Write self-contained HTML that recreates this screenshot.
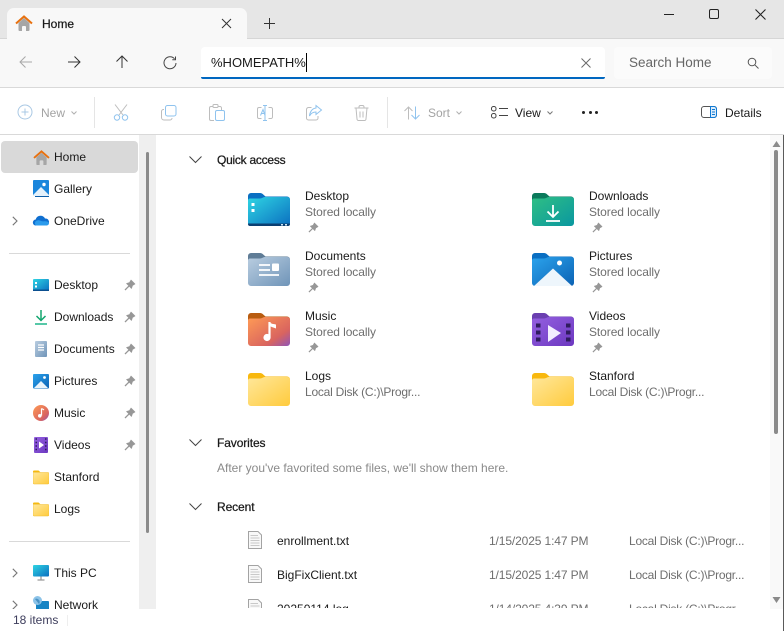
<!DOCTYPE html>
<html><head><meta charset="utf-8"><title>Home</title>
<style>
html,body{margin:0;padding:0;width:784px;height:631px;overflow:hidden;background:#fff}
body{position:relative;font:12px/16px "Liberation Sans",sans-serif;color:#1a1a1a}
.a{position:absolute}
.t{position:absolute;white-space:nowrap;line-height:16px;font-size:12px}
.g{color:#6e6e6e}
.l{letter-spacing:-.23px}
.s{letter-spacing:-.08px}
.m{letter-spacing:-.12px}
.d{color:#a3a3a3}
.b{-webkit-text-stroke:.25px #1a1a1a}
svg{position:absolute;overflow:visible}
</style></head><body>
<svg width="0" height="0" style="position:absolute">
<defs>
<linearGradient id="yf" x1="0" y1="0" x2="1" y2="1"><stop offset="0" stop-color="#ffe79a"/><stop offset="1" stop-color="#ffcb3d"/></linearGradient>
<linearGradient id="bf" x1="0" y1="0" x2="1" y2="1"><stop offset="0" stop-color="#2fd5e3"/><stop offset="1" stop-color="#0b6fc0"/></linearGradient>
<linearGradient id="gf" x1="0" y1="0" x2="1" y2="1"><stop offset="0" stop-color="#2fbf84"/><stop offset="1" stop-color="#0a97a0"/></linearGradient>
<linearGradient id="sf" x1="0" y1="0" x2="1" y2="1"><stop offset="0" stop-color="#b9cde0"/><stop offset="1" stop-color="#6f94b8"/></linearGradient>
<linearGradient id="pf" x1="0" y1="0" x2="1" y2="1"><stop offset="0" stop-color="#2ba3ec"/><stop offset="1" stop-color="#0c62b4"/></linearGradient>
<linearGradient id="of" x1="0" y1="0" x2="1" y2="1"><stop offset="0" stop-color="#ff9b55"/><stop offset=".7" stop-color="#d9645f"/><stop offset="1" stop-color="#8f55b8"/></linearGradient>
<linearGradient id="vf" x1="0" y1="0" x2="1" y2="1"><stop offset="0" stop-color="#9460e0"/><stop offset="1" stop-color="#6c38c0"/></linearGradient>
<symbol id="pin" viewBox="0 0 12 12"><path d="M7 1L11 5 8.500 6.500 7.500 9.500 2.500 4.500 5.500 3.500Z" fill="#979797" stroke="#979797" stroke-width=".6" stroke-linejoin="round"/><path d="M1 11L5 7" stroke="#979797" stroke-width="1.300"/></symbol>
<symbol id="sfold" viewBox="0 0 16 16"><path d="M0 2.500a1 1 0 0 1 1-1h4.500l2 1.800H0z" fill="#f5b90f"/><path d="M0 3.500h15a1 1 0 0 1 1 1V14a1 1 0 0 1-1 1H1a1 1 0 0 1-1-1z" fill="url(#yf)" stroke="#f0bd2e" stroke-width=".5"/></symbol>
<symbol id="doc" viewBox="0 0 14 18"><path d="M.5.500h9.500l3.500 3.500v13.500H.5z" fill="#f8f8f8" stroke="#a3a3a3"/><path d="M2.500 4.500h7.500M2.500 7h9M2.500 9.500h9M2.500 12h9M2.500 14.500h9" stroke="#c9c9c9"/></symbol>
<symbol id="fb" viewBox="0 0 42 33"><path d="M0 3a3 3 0 0 1 3-3h9c1.500 0 2.500.7 3.500 1.700L17.500 3.500H39a3 3 0 0 1 3 3V12H0z" fill="#0a6fc2"/><path d="M0 7.500c0-1 .8-2 2-2h10c2 0 3.500-1.500 4.500-1.500H39a3 3 0 0 1 3 2.500V30a3 3 0 0 1-3 3H3a3 3 0 0 1-3-3z" fill="url(#bf)"/></symbol>
<symbol id="fg" viewBox="0 0 42 33"><path d="M0 3a3 3 0 0 1 3-3h9c1.500 0 2.500.7 3.500 1.700L17.500 3.500H39a3 3 0 0 1 3 3V12H0z" fill="#0b7a5c"/><path d="M0 7.500c0-1 .8-2 2-2h10c2 0 3.500-1.500 4.500-1.500H39a3 3 0 0 1 3 2.500V30a3 3 0 0 1-3 3H3a3 3 0 0 1-3-3z" fill="url(#gf)"/></symbol>
<symbol id="fs" viewBox="0 0 42 33"><path d="M0 3a3 3 0 0 1 3-3h9c1.500 0 2.500.7 3.500 1.700L17.500 3.500H39a3 3 0 0 1 3 3V12H0z" fill="#5f7c96"/><path d="M0 7.500c0-1 .8-2 2-2h10c2 0 3.500-1.500 4.500-1.500H39a3 3 0 0 1 3 2.500V30a3 3 0 0 1-3 3H3a3 3 0 0 1-3-3z" fill="url(#sf)"/></symbol>
<symbol id="fp" viewBox="0 0 42 33"><path d="M0 3a3 3 0 0 1 3-3h9c1.500 0 2.500.7 3.500 1.700L17.500 3.500H39a3 3 0 0 1 3 3V12H0z" fill="#0a6fc2"/><path d="M0 7.500c0-1 .8-2 2-2h10c2 0 3.500-1.500 4.500-1.500H39a3 3 0 0 1 3 2.500V30a3 3 0 0 1-3 3H3a3 3 0 0 1-3-3z" fill="url(#pf)"/></symbol>
<symbol id="fo" viewBox="0 0 42 33"><path d="M0 3a3 3 0 0 1 3-3h9c1.500 0 2.500.7 3.500 1.700L17.500 3.500H39a3 3 0 0 1 3 3V12H0z" fill="#b85c10"/><path d="M0 7.500c0-1 .8-2 2-2h10c2 0 3.500-1.500 4.500-1.500H39a3 3 0 0 1 3 2.500V30a3 3 0 0 1-3 3H3a3 3 0 0 1-3-3z" fill="url(#of)"/></symbol>
<symbol id="fv" viewBox="0 0 42 33"><path d="M0 3a3 3 0 0 1 3-3h9c1.500 0 2.500.7 3.500 1.700L17.500 3.500H39a3 3 0 0 1 3 3V12H0z" fill="#6a3fb0"/><path d="M0 7.500c0-1 .8-2 2-2h10c2 0 3.500-1.500 4.500-1.500H39a3 3 0 0 1 3 2.500V30a3 3 0 0 1-3 3H3a3 3 0 0 1-3-3z" fill="url(#vf)"/></symbol>
<symbol id="fy" viewBox="0 0 42 33"><path d="M0 3a3 3 0 0 1 3-3h9c1.500 0 2.500.7 3.500 1.700L17.500 3.500H39a3 3 0 0 1 3 3V12H0z" fill="#f8b80e"/><path d="M0 7.500c0-1 .8-2 2-2h10c2 0 3.500-1.500 4.500-1.500H39a3 3 0 0 1 3 2.500V30a3 3 0 0 1-3 3H3a3 3 0 0 1-3-3z" fill="url(#yf)"/></symbol>
</defs>
</svg>

<!-- title bar -->
<div class="a" style="left:0;top:0;width:784px;height:39px;background:#e6e6e6"></div>
<div class="a" style="left:247px;top:38px;width:537px;height:1px;background:#d6d6d6"></div>
<div class="a" style="left:0;top:38px;width:7px;height:1px;background:#d6d6d6"></div>
<div class="a" style="left:7px;top:8px;width:240px;height:32px;background:#f8f8f8;border-radius:7px 7px 0 0"></div>
<svg style="left:15px;top:15px" width="18" height="17" viewBox="0 0 18 17"><path d="M3.500 8L9 3l5.500 5v7a1 1 0 0 1-1 1h-2.500v-4a1 1 0 0 0-1-1H8a1 1 0 0 0-1 1v4H4.500a1 1 0 0 1-1-1z" fill="#a6a6a6"/><path d="M1 8.500L9 1.500l8 7" fill="none" stroke="#e8710f" stroke-width="2"/></svg>
<div class="t b" style="left:42px;top:16px;font-size:12px">Home</div>
<svg style="left:221px;top:18px" width="11" height="11"><path d="M1 1l9 9M10 1l-9 9" stroke="#333" stroke-width="1"/></svg>
<svg style="left:264px;top:18px" width="11" height="11"><path d="M5.500 0v11M0 5.500h11" stroke="#333" stroke-width="1"/></svg>
<div class="a" style="left:664px;top:14px;width:10px;height:1px;background:#222"></div>
<div class="a" style="left:709px;top:9px;width:8px;height:8px;border:1.200px solid #222;border-radius:2px"></div>
<svg style="left:755px;top:9px" width="11" height="11"><path d="M.5.500l10 10M10.500.500l-10 10" stroke="#222" stroke-width="1.100"/></svg>

<!-- nav bar -->
<div class="a" style="left:0;top:39px;width:784px;height:48px;background:#f8f8f8"></div>
<div class="a" style="left:7px;top:38px;width:240px;height:2px;background:#f8f8f8"></div>
<div class="a" style="left:0;top:87px;width:784px;height:1px;background:#d9d9d9"></div>
<svg style="left:19px;top:55px" width="14" height="14"><path d="M13 7H1M6.500 1.500L1 7l5.500 5.500" fill="none" stroke="#a8a8a8"/></svg>
<svg style="left:67px;top:55px" width="14" height="14"><path d="M1 7h12M7.500 1.500L13 7l-5.500 5.500" fill="none" stroke="#333"/></svg>
<svg style="left:115px;top:55px" width="14" height="14"><path d="M7 13V1M1.500 6.500L7 1l5.500 5.500" fill="none" stroke="#333"/></svg>
<svg style="left:163px;top:56px" width="14" height="14"><path d="M11.500 2.800A6 6 0 1 0 13 7" fill="none" stroke="#444"/><path d="M12.500.500v3.200H9.300" fill="none" stroke="#444"/></svg>
<div class="a" style="left:201px;top:47px;width:404px;height:30px;background:#fff;border-radius:4px 4px 0 0"></div>
<div class="a" style="left:201px;top:77px;width:404px;height:2px;background:#0067c0;border-radius:0 0 3px 3px"></div>
<div class="t" style="left:211px;top:55px;font-size:13px;color:#1a1a1a">%HOMEPATH%</div>
<div class="a" style="left:306px;top:53px;width:1px;height:19px;background:#000"></div>
<svg style="left:581px;top:58px" width="10" height="10"><path d="M.5.500l9 9M9.500.500l-9 9" stroke="#6a6a6a"/></svg>
<div class="a" style="left:614px;top:47px;width:158px;height:32px;background:#fbfbfb;border-radius:4px"></div>
<div class="t" style="left:629px;top:55px;font-size:13.500px;color:#666">Search Home</div>
<svg style="left:747px;top:57px" width="12" height="12"><circle cx="5" cy="5" r="3.800" fill="none" stroke="#555"/><path d="M7.800 7.800L11.500 11.500" stroke="#555"/></svg>

<!-- toolbar -->
<svg style="left:17px;top:104px" width="16" height="16"><circle cx="8" cy="8" r="7" fill="none" stroke="#a9c8e4"/><path d="M8 4.500v7M4.500 8h7" stroke="#a9c8e4"/></svg>
<div class="t d" style="left:41px;top:105px">New</div>
<svg style="left:71px;top:111px" width="6" height="4"><path d="M.5.500L3 3 5.500.500" fill="none" stroke="#b0b0b0"/></svg>
<div class="a" style="left:94px;top:97px;width:1px;height:31px;background:#e5e5e5"></div>
<svg style="left:113px;top:104px" width="16" height="17"><path d="M2 .5l8 10.500M14 .5L6 11" fill="none" stroke="#bdbdbd"/><circle cx="4" cy="13.500" r="2.700" fill="none" stroke="#8fc3ee"/><circle cx="12" cy="13.500" r="2.700" fill="none" stroke="#8fc3ee"/></svg>
<svg style="left:161px;top:105px" width="16" height="16"><path d="M3 4.500H2.500a2 2 0 0 0-2 2v6a2.500 2.500 0 0 0 2.500 2.500h6a2 2 0 0 0 2-2" fill="none" stroke="#bdbdbd"/><rect x="4.500" y=".5" width="10.500" height="10.500" rx="2" fill="none" stroke="#8fc3ee"/></svg>
<svg style="left:209px;top:104px" width="16" height="17"><path d="M4 2.500H2a1.500 1.500 0 0 0-1.500 1.500v11A1.500 1.500 0 0 0 2 16.500h3M9 2.500h2a1.500 1.500 0 0 1 1.500 1.500v2" fill="none" stroke="#bdbdbd"/><rect x="4" y=".5" width="5" height="3" rx="1" fill="none" stroke="#bdbdbd"/><rect x="6.500" y="6.500" width="9" height="10" rx="1.500" fill="none" stroke="#8fc3ee"/></svg>
<svg style="left:257px;top:105px" width="16" height="16"><path d="M4.500 2.500H2A1.500 1.500 0 0 0 .5 4v8A1.500 1.500 0 0 0 2 13.500h2.500M11.500 2.500H14A1.500 1.500 0 0 1 15.500 4v8a1.500 1.500 0 0 1-1.500 1.500h-2.500" fill="none" stroke="#bdbdbd"/><path d="M8 .5v15M6 .5h4M6 15.500h4" stroke="#8fc3ee" fill="none"/><path d="M3.500 10.500L6 4.500l2 6M4.500 8.500h3" fill="none" stroke="#8fc3ee"/></svg>
<svg style="left:306px;top:105px" width="16" height="16"><path d="M5.500 2.500H2.500a2 2 0 0 0-2 2v8.500a2 2 0 0 0 2 2H10a2 2 0 0 0 2-2v-2" fill="none" stroke="#bdbdbd"/><path d="M10 .5l5.500 4.500L10 9.500V7C7 7 5 8 3.500 11c.3-4 2.500-7.500 6.500-8z" fill="none" stroke="#8fc3ee"/></svg>
<svg style="left:354px;top:105px" width="15" height="16"><path d="M.5 3h14M5 3V2a1.500 1.500 0 0 1 1.500-1.500h2A1.500 1.500 0 0 1 10 2v1M2 3l1 11a1.500 1.500 0 0 0 1.500 1.500h6A1.500 1.500 0 0 0 12 14l1-11M6 6.500v6M9 6.500v6" fill="none" stroke="#bdbdbd"/></svg>
<div class="a" style="left:387px;top:97px;width:1px;height:31px;background:#e5e5e5"></div>
<svg style="left:404px;top:106px" width="16" height="14"><path d="M4.500 13.500V1M.5 5L4.500 1l4 4" fill="none" stroke="#bdbdbd"/><path d="M11.500.5V13M7.500 9l4 4 4-4" fill="none" stroke="#8fc3ee"/></svg>
<div class="t d" style="left:428px;top:105px">Sort</div>
<svg style="left:456px;top:111px" width="6" height="4"><path d="M.5.500L3 3 5.500.500" fill="none" stroke="#b0b0b0"/></svg>
<svg style="left:491px;top:106px" width="17" height="13"><rect x=".5" y=".5" width="4.500" height="4.500" rx="2" fill="none" stroke="#444"/><rect x=".5" y="7.500" width="4.500" height="4.500" rx="2" fill="none" stroke="#444"/><path d="M8 2.500h9M8 9.500h9" stroke="#444"/></svg>
<div class="t" style="left:515px;top:105px">View</div>
<svg style="left:547px;top:111px" width="6" height="4"><path d="M.5.500L3 3 5.500.500" fill="none" stroke="#777"/></svg>
<div class="a" style="left:582px;top:111px;width:3px;height:3px;border-radius:2px;background:#222"></div>
<div class="a" style="left:589px;top:111px;width:3px;height:3px;border-radius:2px;background:#222"></div>
<div class="a" style="left:595px;top:111px;width:3px;height:3px;border-radius:2px;background:#222"></div>
<svg style="left:701px;top:106px" width="17" height="13"><rect x=".5" y=".5" width="15" height="11" rx="2.500" fill="none" stroke="#555"/><path d="M9.500.5H13a2.500 2.500 0 0 1 2.500 2.500v6a2.500 2.500 0 0 1-2.500 2.500H9.500z" fill="#dcecfa" stroke="#0f7ad4"/><path d="M11 3.500h3M11 6h3M11 8.500h3" stroke="#0f7ad4"/></svg>
<div class="t" style="left:725px;top:105px">Details</div>
<div class="a" style="left:0;top:134px;width:784px;height:1px;background:#d9d9d9"></div>

<!-- sidebar gutter -->
<div class="a" style="left:139px;top:135px;width:17px;height:474px;background:#efefef"></div>
<div class="a" style="left:146px;top:152px;width:3px;height:381px;background:#8a8a8a;border-radius:2px"></div>
<div class="a" style="left:1px;top:141px;width:137px;height:32px;background:#d9d9d9;border-radius:4px"></div>

<!-- sidebar content, clipped -->
<div class="a" style="left:0;top:135px;width:139px;height:474px;overflow:hidden">
  <svg style="left:33px;top:15px" width="17" height="15" viewBox="0 0 18 16"><path d="M3.500 8L9 3l5.500 5v7a1 1 0 0 1-1 1h-2.500v-4a1 1 0 0 0-1-1H8a1 1 0 0 0-1 1v4H4.500a1 1 0 0 1-1-1z" fill="#a6a6a6"/><path d="M1 8.500L9 1.500l8 7" fill="none" stroke="#e8710f" stroke-width="2"/></svg>
  <div class="t" style="left:54px;top:14px">Home</div>

  <svg style="left:33px;top:45px" width="16" height="17"><rect width="16" height="16" rx="1" fill="#1a86dc"/><path d="M0 15l8-8 8 8v1H0z" fill="#e4f1fb"/><circle cx="11" cy="4.500" r="1.700" fill="#fff"/><path d="M2 16.500h14" stroke="#0f5ea8"/></svg>
  <div class="t" style="left:54px;top:46px">Gallery</div>

  <svg style="left:12px;top:81px" width="6" height="10"><path d="M.8.800L5 5 .8 9.200" fill="none" stroke="#777" stroke-width="1.100"/></svg>
  <svg style="left:33px;top:80px" width="16" height="11"><path d="M3 10.500a3 3 0 0 1-.3-6A5 5 0 0 1 12 3.500a3.500 3.500 0 0 1 1 7z" fill="#0f6fd0"/><path d="M3 10.500a2.800 2.800 0 0 1 0-4.500c2-1 3-1 5 0 3 1 6-1 8 2 0 1.500-1 2.500-3 2.500z" fill="#2b9bec"/></svg>
  <div class="t" style="left:54px;top:78px">OneDrive</div>

  <div class="a" style="left:9px;top:118px;width:121px;height:1px;background:#d9d9d9"></div>

  <svg style="left:33px;top:144px" width="16" height="12"><rect width="16" height="12" rx="1" fill="url(#bf)"/><rect x="2" y="3" width="2" height="2" fill="#fff"/><rect x="2" y="6.500" width="2" height="2" fill="#fff"/><rect y="10.500" width="16" height="1.500" fill="#0b4f8f"/></svg>
  <div class="t" style="left:54px;top:142px">Desktop</div>
  <svg style="left:124px;top:144px" width="12" height="12"><use href="#pin"/></svg>

  <svg style="left:35px;top:174px" width="12" height="16"><path d="M6 1v10M1.500 7L6 11.500 10.500 7" fill="none" stroke="#12a66f" stroke-width="1.500"/><path d="M0 15h12" stroke="#1fb58a" stroke-width="1.500"/></svg>
  <div class="t" style="left:54px;top:174px">Downloads</div>
  <svg style="left:124px;top:176px" width="12" height="12"><use href="#pin"/></svg>

  <svg style="left:35px;top:206px" width="12" height="16"><rect width="12" height="16" rx="1" fill="url(#sf)"/><path d="M3 4h6M3 6.500h6M3 9h6" stroke="#fff" stroke-width="1.200"/></svg>
  <div class="t" style="left:54px;top:206px">Documents</div>
  <svg style="left:124px;top:208px" width="12" height="12"><use href="#pin"/></svg>

  <svg style="left:33px;top:239px" width="16" height="15"><rect width="16" height="14.500" rx="1" fill="url(#pf)"/><path d="M1 14L8 7l7 7z" fill="#eaf4fb"/><circle cx="11.500" cy="3.500" r="1.400" fill="#fff"/></svg>
  <div class="t" style="left:54px;top:238px">Pictures</div>
  <svg style="left:124px;top:240px" width="12" height="12"><use href="#pin"/></svg>

  <svg style="left:33px;top:270px" width="16" height="16"><circle cx="8" cy="8" r="8" fill="url(#of)"/><path d="M8.500 3.500v7" stroke="#fff" stroke-width="1.200"/><path d="M8.500 3.500c1 .5 2 1 2.500 1.500" stroke="#fff" fill="none"/><circle cx="6.800" cy="10.800" r="1.800" fill="#fff"/></svg>
  <div class="t" style="left:54px;top:270px">Music</div>
  <svg style="left:124px;top:272px" width="12" height="12"><use href="#pin"/></svg>

  <svg style="left:34px;top:302px" width="14" height="16"><rect width="14" height="16" rx="1" fill="url(#vf)"/><path d="M5 4.500l5 3.500-5 3.500z" fill="#fff"/><path d="M1.500 2h1.500M1.500 5.500h1.500M1.500 9h1.500M1.500 12.500h1.500M11 2h1.500M11 5.500h1.500M11 9h1.500M11 12.500h1.500" stroke="#2f1c5e" stroke-width="1.400"/></svg>
  <div class="t" style="left:54px;top:302px">Videos</div>
  <svg style="left:124px;top:304px" width="12" height="12"><use href="#pin"/></svg>

  <svg style="left:33px;top:334px" width="16" height="16"><use href="#sfold"/></svg>
  <div class="t" style="left:54px;top:334px">Stanford</div>
  <svg style="left:33px;top:366px" width="16" height="16"><use href="#sfold"/></svg>
  <div class="t" style="left:54px;top:366px">Logs</div>

  <div class="a" style="left:9px;top:406px;width:121px;height:1px;background:#d9d9d9"></div>

  <svg style="left:12px;top:433px" width="6" height="10"><path d="M.8.800L5 5 .8 9.200" fill="none" stroke="#777" stroke-width="1.100"/></svg>
  <svg style="left:33px;top:430px" width="16" height="16"><rect width="16" height="11.500" rx="1" fill="url(#bf)"/><path d="M8 11.500v3M4.500 15h7" stroke="#9a9a9a" stroke-width="1.300"/></svg>
  <div class="t" style="left:54px;top:430px">This PC</div>

  <svg style="left:12px;top:465px" width="6" height="10"><path d="M.8.800L5 5 .8 9.200" fill="none" stroke="#777" stroke-width="1.100"/></svg>
  <svg style="left:33px;top:461px" width="16" height="16"><rect x="3" y="5" width="13" height="10" rx="1" fill="#1684c4"/><circle cx="4.500" cy="4.500" r="4.500" fill="#8cc3e8"/><path d="M2 3c2-1 3 0 4 1s1 3 0 4" fill="#4a92c4"/></svg>
  <div class="t" style="left:54px;top:462px">Network</div>
</div>

<!-- status bar -->
<div class="t" style="left:13px;top:612px;color:#3d3d5c">18 items</div>
<div class="a" style="left:67px;top:615px;width:1px;height:11px;background:#eee"></div>

<!-- main content, clipped -->
<div class="a" style="left:156px;top:135px;width:614px;height:473px;overflow:hidden">
  <svg style="left:33px;top:21px" width="13" height="7"><path d="M.5.500L6.500 6.500 12.500.500" fill="none" stroke="#444"/></svg>
  <div class="t b" style="left:61px;top:17px;letter-spacing:-.25px">Quick access</div>

  <!-- Desktop -->
  <svg style="left:92px;top:58px" width="42" height="33"><use href="#fb"/><rect x="3.500" y="10" width="3" height="3" fill="#fff"/><rect x="3.500" y="16" width="3" height="3" fill="#fff"/><path d="M0 30.500h42V31a2 2 0 0 1-2 2H2a2 2 0 0 1-2-2z" fill="#0b3f72"/><rect x="33" y="31" width="2" height="1.500" fill="#cfe8f6"/><rect x="37" y="31" width="2" height="1.500" fill="#cfe8f6"/></svg>
  <div class="t" style="left:149px;top:53px">Desktop</div>
  <div class="t g s" style="left:149px;top:69px">Stored locally</div>
  <svg style="left:152px;top:87px" width="11" height="11"><use href="#pin"/></svg>

  <!-- Downloads -->
  <svg style="left:376px;top:58px" width="42" height="33"><use href="#fg"/><path d="M21 12v12M15.500 18.500L21 24l5.500-5.500" fill="none" stroke="#fff" stroke-width="1.800"/><path d="M14 28h14" stroke="#fff" stroke-width="1.800"/></svg>
  <div class="t" style="left:433px;top:53px">Downloads</div>
  <div class="t g s" style="left:433px;top:69px">Stored locally</div>
  <svg style="left:436px;top:87px" width="11" height="11"><use href="#pin"/></svg>

  <!-- Documents -->
  <svg style="left:92px;top:118px" width="42" height="33"><use href="#fs"/><path d="M11 12h11M11 17h11M11 22h20" stroke="#fff" stroke-width="1.800"/><rect x="24" y="10.500" width="7" height="7.500" rx="1" fill="#fff"/></svg>
  <div class="t" style="left:149px;top:113px">Documents</div>
  <div class="t g s" style="left:149px;top:129px">Stored locally</div>
  <svg style="left:152px;top:147px" width="11" height="11"><use href="#pin"/></svg>

  <!-- Pictures -->
  <svg style="left:376px;top:118px" width="42" height="33"><use href="#fp"/><path d="M2 33L21 15.500 40 33z" fill="#eef6fc"/><circle cx="27.500" cy="10" r="2.500" fill="#fff"/></svg>
  <div class="t" style="left:433px;top:113px">Pictures</div>
  <div class="t g s" style="left:433px;top:129px">Stored locally</div>
  <svg style="left:436px;top:147px" width="11" height="11"><use href="#pin"/></svg>

  <!-- Music -->
  <svg style="left:92px;top:178px" width="42" height="33"><use href="#fo"/><path d="M21.500 9v15.500" stroke="#fff" stroke-width="2.200"/><path d="M21 9c2 2 5 2 7 2.500v4c-2-1-5-1.500-7-3z" fill="#fff"/><circle cx="19" cy="24.500" r="3.600" fill="#fff"/></svg>
  <div class="t" style="left:149px;top:173px">Music</div>
  <div class="t g s" style="left:149px;top:189px">Stored locally</div>
  <svg style="left:152px;top:207px" width="11" height="11"><use href="#pin"/></svg>

  <!-- Videos -->
  <svg style="left:376px;top:178px" width="42" height="33"><use href="#fv"/><path d="M16 12l13 8-13 9z" fill="#f3eeff"/><g fill="#2f1c5e"><rect x="4" y="10.500" width="4.500" height="4"/><rect x="4" y="17.500" width="4.500" height="4"/><rect x="4" y="24.500" width="4.500" height="4"/><rect x="34" y="10.500" width="4.500" height="4"/><rect x="34" y="17.500" width="4.500" height="4"/><rect x="34" y="24.500" width="4.500" height="4"/></g></svg>
  <div class="t" style="left:433px;top:173px">Videos</div>
  <div class="t g s" style="left:433px;top:189px">Stored locally</div>
  <svg style="left:436px;top:207px" width="11" height="11"><use href="#pin"/></svg>

  <!-- Logs -->
  <svg style="left:92px;top:238px" width="42" height="33"><use href="#fy"/></svg>
  <div class="t" style="left:149px;top:233px">Logs</div>
  <div class="t g l" style="left:149px;top:249px">Local Disk (C:)\Progr...</div>

  <!-- Stanford -->
  <svg style="left:376px;top:238px" width="42" height="33"><use href="#fy"/></svg>
  <div class="t" style="left:433px;top:233px">Stanford</div>
  <div class="t g l" style="left:433px;top:249px">Local Disk (C:)\Progr...</div>

  <!-- Favorites -->
  <svg style="left:33px;top:304px" width="13" height="7"><path d="M.5.500L6.500 6.500 12.500.500" fill="none" stroke="#444"/></svg>
  <div class="t b" style="left:61px;top:300px;letter-spacing:-.1px">Favorites</div>
  <div class="t" style="left:61px;top:325px;color:#8a8a8a">After you've favorited some files, we'll show them here.</div>

  <!-- Recent -->
  <svg style="left:33px;top:368px" width="13" height="7"><path d="M.5.500L6.500 6.500 12.500.500" fill="none" stroke="#444"/></svg>
  <div class="t b" style="left:61px;top:364px;letter-spacing:-.1px">Recent</div>

  <svg style="left:92px;top:396px" width="14" height="18"><use href="#doc"/></svg>
  <div class="t" style="left:121px;top:398px">enrollment.txt</div>
  <div class="t g m" style="left:333px;top:398px">1/15/2025 1:47 PM</div>
  <div class="t g l" style="left:473px;top:398px">Local Disk (C:)\Progr...</div>

  <svg style="left:92px;top:430px" width="14" height="18"><use href="#doc"/></svg>
  <div class="t" style="left:121px;top:432px">BigFixClient.txt</div>
  <div class="t g m" style="left:333px;top:432px">1/15/2025 1:47 PM</div>
  <div class="t g l" style="left:473px;top:432px">Local Disk (C:)\Progr...</div>

  <svg style="left:92px;top:464px" width="14" height="18"><use href="#doc"/></svg>
  <div class="t" style="left:121px;top:466px">20250114.log</div>
  <div class="t g m" style="left:333px;top:466px">1/14/2025 4:39 PM</div>
  <div class="t g l" style="left:473px;top:466px">Local Disk (C:)\Progr...</div>
</div>

<!-- right scrollbar -->
<div class="a" style="left:770px;top:135px;width:13px;height:474px;background:#f9f9f9"></div>
<svg style="left:772px;top:140px" width="9" height="8"><path d="M4.500 1L8.500 7H.5z" fill="#8a8a8a"/></svg>
<div class="a" style="left:774px;top:150px;width:4px;height:284px;background:#8a8a8a;border-radius:2px"></div>
<svg style="left:772px;top:596px" width="9" height="8"><path d="M4.500 7L.5 1h8z" fill="#8a8a8a"/></svg>
<div class="a" style="left:783px;top:135px;width:1px;height:496px;background:#5a5a5a"></div>
</body></html>
